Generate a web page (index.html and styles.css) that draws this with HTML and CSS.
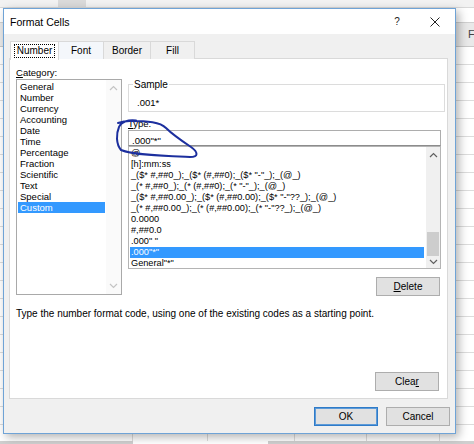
FILE: index.html
```html
<!DOCTYPE html>
<html>
<head>
<meta charset="utf-8">
<title>Format Cells</title>
<link rel="stylesheet" href="styles.css">
</head>
<body>
<div class="screen">
  <div class="sheet">
    <div class="sheet-top"><div class="ribbon-block"></div></div>
    <div class="formula-bar"></div>
    <div class="col-header"><div class="col-cell">F</div></div>
    <div class="grid">
      <div class="gcol w133"></div>
      <div class="gcol w75"></div>
      <div class="gcol w87"></div>
      <div class="gcol w72"></div>
      <div class="gcol w73"></div>
      <div class="gcol rest"></div>
    </div>
    <div class="sheet-tabs"><div class="sheet-tab-active"></div></div>
  </div>

  <div class="dialog">
    <div class="titlebar">
      <span class="title">Format Cells</span>
      <span class="help">?</span>
      <span class="close"><svg width="10" height="10" viewBox="0 0 10 10"><path d="M0.5 0.5 L9.5 9.5 M9.5 0.5 L0.5 9.5" stroke="#222" stroke-width="1" fill="none"/></svg></span>
    </div>
    <div class="dbody">
      <div class="tabs">
        <div class="tab active"><span class="focus">Number</span></div>
        <div class="tab hover">Font</div>
        <div class="tab">Border</div>
        <div class="tab">Fill</div>
      </div>
      <div class="panel">
        <div class="cols">
          <div class="cat-col">
            <div class="label"><u>C</u>ategory:</div>
            <div class="listbox cat">
              <ul class="items">
                <li>General</li>
                <li>Number</li>
                <li>Currency</li>
                <li>Accounting</li>
                <li>Date</li>
                <li>Time</li>
                <li>Percentage</li>
                <li>Fraction</li>
                <li>Scientific</li>
                <li>Text</li>
                <li>Special</li>
                <li class="sel">Custom</li>
              </ul>
              <div class="vscroll light">
                <div class="sbtn"><svg width="9" height="6" viewBox="0 0 9 6"><path d="M1 5 L4.5 1.5 L8 5" stroke="#c4c4c4" stroke-width="1.2" fill="none"/></svg></div>
                <div class="track"></div>
                <div class="sbtn"><svg width="9" height="6" viewBox="0 0 9 6"><path d="M1 1 L4.5 4.5 L8 1" stroke="#c4c4c4" stroke-width="1.2" fill="none"/></svg></div>
              </div>
            </div>
          </div>
          <div class="main-col">
            <fieldset class="sample">
              <legend>Sample</legend>
              <div class="sample-val">.001*</div>
            </fieldset>
            <div class="label type-label"><u>T</u>ype:</div>
            <div class="input">.000"*"</div>
            <div class="listbox types">
              <ul class="items">
                <li>@</li>
                <li>[h]:mm:ss</li>
                <li>_($* #,##0_);_($* (#,##0);_($* "-"_);_(@_)</li>
                <li>_(* #,##0_);_(* (#,##0);_(* "-"_);_(@_)</li>
                <li>_($* #,##0.00_);_($* (#,##0.00);_($* "-"??_);_(@_)</li>
                <li>_(* #,##0.00_);_(* (#,##0.00);_(* "-"??_);_(@_)</li>
                <li>0.0000</li>
                <li>#,##0.0</li>
                <li>.000" "</li>
                <li class="sel">.000"*"</li>
                <li>General"*"</li>
              </ul>
              <div class="vscroll">
                <div class="sbtn"><svg width="9" height="6" viewBox="0 0 9 6"><path d="M1 5 L4.5 1.5 L8 5" stroke="#606060" stroke-width="1.2" fill="none"/></svg></div>
                <div class="track"><div class="thumb"></div></div>
                <div class="sbtn short"><svg width="9" height="6" viewBox="0 0 9 6"><path d="M1 1 L4.5 4.5 L8 1" stroke="#606060" stroke-width="1.2" fill="none"/></svg></div>
              </div>
            </div>
            <div class="btn-row"><button class="btn"><u>D</u>elete</button></div>
          </div>
        </div>
        <p class="desc">Type the number format code, using one of the existing codes as a starting point.</p>
        <div class="btn-row clear-row"><button class="btn">Clea<u>r</u></button></div>
      </div>
      <div class="footer">
        <button class="btn default">OK</button>
        <button class="btn">Cancel</button>
      </div>
    </div>
  </div>

  <svg class="scribble" width="474" height="444" viewBox="0 0 474 444">
    <path d="M136 120.5 C 128 119.5, 121 122, 119 127 C 116 134, 116 144, 121 150 C 132 155, 165 156, 190 157 C 199 157, 198 152, 191 147 C 182 141, 173 135, 166 128 C 160 122, 148 121, 130 121 C 125 121, 121 122, 118 123" stroke="#1c2f9e" stroke-width="2" fill="none" stroke-linecap="round" stroke-linejoin="round"/>
  </svg>
</div>
</body>
</html>
```

FILE: styles.css
```css
* { box-sizing: border-box; }
html, body { margin: 0; padding: 0; }
body {
  width: 474px;
  height: 444px;
  overflow: hidden;
  font-family: "Liberation Sans", Arial, sans-serif;
  font-size: 9.5px;
  color: #000;
  background: #fff;
}
.screen {
  position: relative;
  width: 474px;
  height: 444px;
  overflow: hidden;
}

/* background spreadsheet */
.sheet {
  display: flex;
  flex-direction: column;
  height: 100%;
}
.sheet-top {
  height: 8px;
  background: #f2f2f2;
  border-bottom: 1px solid #d8d8d8;
  display: flex;
}
.ribbon-block {
  margin-left: 58px;
  width: 28px;
  background: #dadada;
}
.formula-bar {
  height: 14px;
  background: #fff;
}
.col-header {
  height: 25px;
  background: #e9e9e9;
  border-top: 1px solid #d0d0d0;
  border-bottom: 1px solid #c8c8c8;
  display: flex;
  justify-content: flex-end;
}
.col-cell {
  width: 14px;
  font-size: 11px;
  line-height: 23px;
  color: #444;
  padding-left: 8px;
  overflow: hidden;
}
.grid {
  flex: 1;
  display: flex;
  background: repeating-linear-gradient(to bottom, transparent 0, transparent 17px, #dcdcdc 17px, #dcdcdc 18px);
}
.gcol { border-right: 1px solid #dcdcdc; }
.w133 { width: 133px; }
.w75 { width: 75px; }
.w87 { width: 87px; }
.w72 { width: 72px; }
.w73 { width: 73px; }
.rest { flex: 1; border-right: 0; }
.sheet-tabs {
  height: 3px;
  background: #cfcfcf;
  display: flex;
}
.sheet-tab-active {
  margin-left: 133px;
  width: 135px;
  background: #fff;
}

/* dialog window */
.dialog {
  position: absolute;
  left: 3px;
  top: 8px;
  width: 453px;
  height: 426px;
  border: 1px solid #6fa3d6;
  background: #f0f0f0;
  box-shadow: 3px 3px 9px rgba(0, 0, 0, 0.3);
  display: flex;
  flex-direction: column;
}
.titlebar {
  height: 25px;
  background: #fff;
  display: flex;
  align-items: center;
  padding-left: 6px;
  font-size: 10.5px;
}
.title { flex: 1; }
.help {
  width: 16px;
  text-align: center;
  margin-right: 22px;
  font-size: 10px;
  color: #222;
}
.close {
  width: 16px;
  margin-right: 12px;
  display: flex;
  justify-content: center;
}
.dbody {
  flex: 1;
  display: flex;
  flex-direction: column;
  padding: 7px 6px 6px 5px;
}

/* tabs */
.tabs {
  display: flex;
  height: 18px;
  padding-left: 1px;
  position: relative;
  z-index: 1;
  margin-bottom: -1px;
}
.tab {
  height: 18px;
  border: 1px solid #d9d9d9;
  border-bottom: 0;
  background: #f0f0f0;
  margin-left: -1px;
  display: flex;
  align-items: center;
  justify-content: center;
  font-size: 10px;
}
.tab:nth-child(1) { width: 49px; margin-left: 0; }
.tab:nth-child(2) { width: 46px; }
.tab:nth-child(3) { width: 48px; }
.tab:nth-child(4) { width: 45px; }
.tab.active {
  background: #fff;
  border-color: #d9d9d9;
  height: 19px;
}
.tab.hover { background: #f4f7fb; }
.focus {
  border: 1px dotted #000;
  padding: 0 2px;
  line-height: 12px;
}

/* panel */
.panel {
  height: 341px;
  margin-right: 1px;
  background: #fff;
  border: 1px solid #d9d9d9;
  padding: 8px 2px 7px 6px;
  display: flex;
  flex-direction: column;
}
.cols {
  display: flex;
  gap: 6px;
}
.cat-col { width: 106px; }
.main-col {
  flex: 1;
  padding-top: 12px;
}
.label {
  height: 11px;
  line-height: 11px;
  margin-bottom: 1px;
}

.listbox {
  display: flex;
  border: 1px solid #a9a9a9;
  background: #fff;
  overflow: hidden;
}
.listbox.cat { height: 216px; }
.items {
  list-style: none;
  margin: 0;
  flex: 1;
  min-width: 0;
}
.cat .items { padding: 1px 1px 0 1px; }
.cat .items li { padding-left: 2px; }
.items li {
  height: 11px;
  line-height: 11px;
  white-space: nowrap;
  overflow: hidden;
}
.items li.sel {
  background: #3399ff;
  color: #fff;
}
.vscroll {
  width: 14px;
  display: flex;
  flex-direction: column;
  background: #f0f0f0;
}
.vscroll.light {
  width: 15px;
  background: #fafafa;
}
.sbtn {
  height: 16px;
  display: flex;
  align-items: center;
  justify-content: center;
}
.sbtn.short { height: 12px; }
.track {
  flex: 1;
  display: flex;
  flex-direction: column;
  justify-content: flex-end;
  padding: 0 1px;
}
.thumb {
  height: 24px;
  background: #cdcdcd;
}

/* sample group */
.sample {
  margin: 0;
  padding: 0 4px 3px 4px;
  border: 1px solid #dcdcdc;
  min-width: 0;
}
.sample legend {
  padding: 0 1px;
  line-height: 11px;
  font-size: 10px;
}
.sample-val {
  margin-top: 7px;
  padding-left: 4px;
  height: 11px;
  line-height: 11px;
}
.type-label { margin-top: 6px; }
.input {
  height: 16px;
  margin-right: 4px;
  border: 1px solid #adadad;
  border-bottom-color: #8c8c8c;
  padding: 4px 0 0 3px;
  line-height: 11px;
}
.listbox.types {
  height: 123px;
  margin-right: 4px;
  border-color: #b4b4b4;
  font-size: 9.2px;
}
.types .items { padding: 1px 1px 0 1px; }
.types .items li { padding-left: 1px; margin-right: 1px; }

/* buttons */
.btn-row {
  display: flex;
  justify-content: flex-end;
  margin-right: 5px;
}
.main-col .btn-row { margin-top: 8px; }
.btn {
  width: 64px;
  height: 19px;
  padding: 0;
  background: #e1e1e1;
  border: 1px solid #adadad;
  font-family: inherit;
  font-size: 10px;
  color: #000;
  line-height: 16px;
}
.desc {
  margin: 12px 0 0 0;
  line-height: 11px;
  height: 11px;
  font-size: 10px;
}
.clear-row {
  margin-top: auto;
  margin-right: 6px;
}

.footer {
  margin-top: 8px;
  margin-right: -1px;
  display: flex;
  justify-content: flex-end;
  gap: 8px;
}
.btn.default {
  border: 1px solid #2f7bc8;
  box-shadow: inset 0 0 0 1px #5c9ad8;
}

.scribble {
  position: absolute;
  left: 0;
  top: 0;
  pointer-events: none;
}
```
